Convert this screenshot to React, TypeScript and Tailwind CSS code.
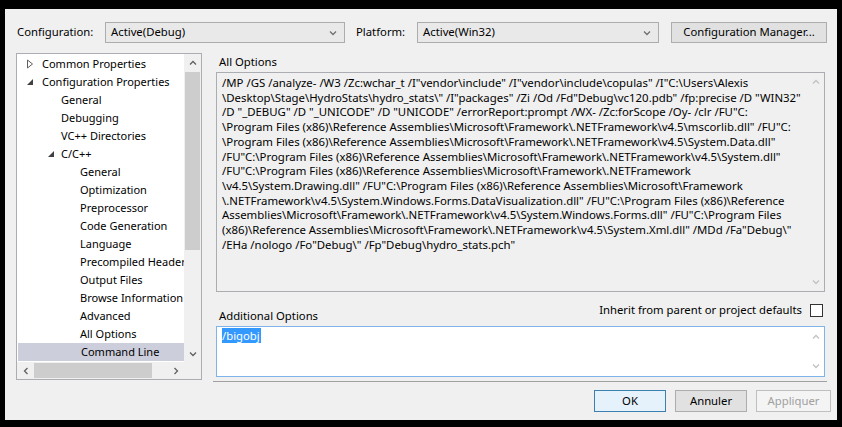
import React from "react";

const allOptions = [
  '/MP /GS /analyze- /W3 /Zc:wchar_t /I"vendor\\include" /I"vendor\\include\\copulas" /I"C:\\Users\\Alexis',
  '\\Desktop\\Stage\\HydroStats\\hydro_stats\\" /I"packages" /Zi /Od /Fd"Debug\\vc120.pdb" /fp:precise /D "WIN32"',
  '/D "_DEBUG" /D "_UNICODE" /D "UNICODE" /errorReport:prompt /WX- /Zc:forScope /Oy- /clr /FU"C:',
  '\\Program Files (x86)\\Reference Assemblies\\Microsoft\\Framework\\.NETFramework\\v4.5\\mscorlib.dll" /FU"C:',
  '\\Program Files (x86)\\Reference Assemblies\\Microsoft\\Framework\\.NETFramework\\v4.5\\System.Data.dll"',
  '/FU"C:\\Program Files (x86)\\Reference Assemblies\\Microsoft\\Framework\\.NETFramework\\v4.5\\System.dll"',
  '/FU"C:\\Program Files (x86)\\Reference Assemblies\\Microsoft\\Framework\\.NETFramework',
  '\\v4.5\\System.Drawing.dll" /FU"C:\\Program Files (x86)\\Reference Assemblies\\Microsoft\\Framework',
  '\\.NETFramework\\v4.5\\System.Windows.Forms.DataVisualization.dll" /FU"C:\\Program Files (x86)\\Reference',
  'Assemblies\\Microsoft\\Framework\\.NETFramework\\v4.5\\System.Windows.Forms.dll" /FU"C:\\Program Files',
  '(x86)\\Reference Assemblies\\Microsoft\\Framework\\.NETFramework\\v4.5\\System.Xml.dll" /MDd /Fa"Debug\\"',
  '/EHa /nologo /Fo"Debug\\" /Fp"Debug\\hydro_stats.pch"',
];

type TreeItem = { label: string; indent: number; arrow?: "open" | "closed"; selected?: boolean };

const treeItems: TreeItem[] = [
  { label: "Common Properties", indent: 0, arrow: "closed" },
  { label: "Configuration Properties", indent: 0, arrow: "open" },
  { label: "General", indent: 1 },
  { label: "Debugging", indent: 1 },
  { label: "VC++ Directories", indent: 1 },
  { label: "C/C++", indent: 1, arrow: "open" },
  { label: "General", indent: 2 },
  { label: "Optimization", indent: 2 },
  { label: "Preprocessor", indent: 2 },
  { label: "Code Generation", indent: 2 },
  { label: "Language", indent: 2 },
  { label: "Precompiled Headers", indent: 2 },
  { label: "Output Files", indent: 2 },
  { label: "Browse Information", indent: 2 },
  { label: "Advanced", indent: 2 },
  { label: "All Options", indent: 2 },
  { label: "Command Line", indent: 2, selected: true },
];

const textPad = ["pl-[25px]", "pl-[44px]", "pl-[63px]"];
const arrowPos = ["left-[9px]", "left-[30px]", "left-[49px]"];

const Chevron = ({ dir, className = "" }: { dir: "up" | "down" | "left" | "right"; className?: string }) => {
  const pts = {
    up: "1,5.5 4,2.5 7,5.5",
    down: "1,2.5 4,5.5 7,2.5",
    left: "5.5,1 2.5,4 5.5,7",
    right: "2.5,1 5.5,4 2.5,7",
  }[dir];
  return (
    <svg width="8" height="8" viewBox="0 0 8 8" className={className}>
      <polyline points={pts} fill="none" stroke="currentColor" strokeWidth="1.3" />
    </svg>
  );
};

const TreeArrow = ({ open }: { open: boolean }) =>
  open ? (
    <svg width="8" height="8" viewBox="0 0 8 8">
      <polygon points="7,1 7,7 1,7" fill="#404040" />
    </svg>
  ) : (
    <svg width="8" height="10" viewBox="0 0 8 10">
      <polygon points="1.5,1 6.5,5 1.5,9" fill="none" stroke="#606060" strokeWidth="1" />
    </svg>
  );

const Combo = ({ value, width }: { value: string; width: string }) => (
  <div className={`flex h-[21px] items-center justify-between border border-[#acacac] bg-[#e9e9e9] pl-[5px] pr-[7px] ${width}`}>
    <span>{value}</span>
    <Chevron dir="down" className="text-[#707070]" />
  </div>
);

const Button = ({ label, width, variant = "normal" }: { label: string; width: string; variant?: "default" | "normal" | "disabled" }) => {
  const styles = {
    default: "border-[#3c7fb1] bg-[#e5f1fb] text-black",
    normal: "border-[#adadad] bg-[#e1e1e1] text-black",
    disabled: "border-[#bfbfbf] bg-[#f4f4f4] text-[#a0a0a0]",
  }[variant];
  return <div className={`flex h-[22px] items-center justify-center border ${styles} ${width}`}>{label}</div>;
};

export default function App() {
  return (
    <div className="h-[427px] w-[842px] overflow-hidden bg-black pb-[7px] pl-[5px] pr-[5px] pt-[9px] font-['Noto_Sans',sans-serif] text-[11.3px] text-black">
      <div className="flex h-full flex-col bg-[#f0f0f0]">
        {/* configuration / platform bar */}
        <div className="flex items-center pl-[11px] pt-[13px]">
          <span className="w-[89px] pl-[1px]">Configuration:</span>
          <Combo value="Active(Debug)" width="w-[240px]" />
          <span className="ml-[11px] w-[61px]">Platform:</span>
          <Combo value="Active(Win32)" width="w-[242px]" />
          <div className="ml-[12px] flex h-[21px] w-[156px] items-center justify-center border border-[#adadad] bg-[#e1e1e1]">
            Configuration Manager...
          </div>
        </div>

        <div className="mt-[10px] flex items-start pl-[11px]">
          {/* property tree */}
          <div className="flex h-[327px] w-[186px] flex-col border border-[#abadb3] bg-white">
            <div className="flex min-h-0 flex-1">
              <div className="min-w-0 flex-1 overflow-hidden pt-[1px] text-[11px]">
                {treeItems.map((item, i) => (
                  <div
                    key={i}
                    className={`relative flex h-[18px] items-center whitespace-nowrap ${textPad[item.indent]} ${item.selected ? "ml-[1px] bg-[#cccedb]" : ""}`}
                  >
                    {item.arrow && (
                      <span className={`absolute top-0 flex h-full items-center ${arrowPos[item.indent]}`}>
                        <TreeArrow open={item.arrow === "open"} />
                      </span>
                    )}
                    {item.label}
                  </div>
                ))}
              </div>
              <div className="flex w-[17px] flex-col items-center bg-[#f0f0f0]">
                <div className="flex h-[17px] items-center justify-center text-[#606060]">
                  <Chevron dir="up" />
                </div>
                <div className="mt-[1px] h-[178px] w-[15px] bg-[#cdcdcd]" />
                <div className="flex-1" />
                <div className="flex h-[17px] items-center justify-center text-[#606060]">
                  <Chevron dir="down" />
                </div>
              </div>
            </div>
            <div className="flex h-[17px] bg-[#f0f0f0]">
              <div className="flex w-[17px] items-center justify-center text-[#606060]">
                <Chevron dir="left" />
              </div>
              <div className="my-[1px] w-[118px] bg-[#cdcdcd]" />
              <div className="flex-1" />
              <div className="flex w-[17px] items-center justify-center text-[#606060]">
                <Chevron dir="right" />
              </div>
              <div className="w-[17px]" />
            </div>
          </div>

          {/* options column */}
          <div className="ml-[11px] flex w-[614px] flex-col">
            <div className="flex h-[19px] items-center pl-[6px]">All Options</div>
            <div className="ml-[3px] flex h-[220px] w-[609px] border border-[#abadb3] bg-[#f0f0f0]">
              <div className="min-w-0 flex-1 overflow-hidden whitespace-nowrap pl-[5px] pt-[3px] text-[11.4px] leading-[14.7px]">
                {allOptions.map((line, i) => (
                  <div key={i}>{line}</div>
                ))}
              </div>
              <div className="flex w-[17px] flex-col items-center justify-between py-[5px] text-[#c2c2c2]">
                <Chevron dir="up" />
                <Chevron dir="down" />
              </div>
            </div>

            <div className="ml-[3px] flex h-[34px] w-[609px] justify-between pr-[2px]">
              <div className="flex h-[18px] items-center self-end pb-[2px] pl-[3px] leading-[16px]">Additional Options</div>
              <div className="mt-[9px] flex h-[18px] items-center gap-[8px]">
                <span>Inherit from parent or project defaults</span>
                <div className="h-[13px] w-[13px] border border-[#333333] bg-white" />
              </div>
            </div>

            <div className="ml-[3px] flex h-[51px] w-[609px] border border-[#7eb4ea] bg-white">
              <div className="min-w-0 flex-1 pl-[5px] pt-[1px]">
                <span className="bg-[#3399ff] pr-[1px] leading-[15px] text-white">/bigobj</span>
              </div>
              <div className="flex w-[17px] flex-col items-center justify-between py-[6px] text-[#c2c2c2]">
                <Chevron dir="up" />
                <Chevron dir="down" />
              </div>
            </div>

            <div className="mt-[4px] h-px bg-[#a0a0a0]" />
          </div>
        </div>

        {/* dialog buttons */}
        <div className="mt-[8px] flex justify-end gap-[9px] pr-[6px]">
          <Button label="OK" width="w-[72px]" variant="default" />
          <Button label="Annuler" width="w-[72px]" />
          <Button label="Appliquer" width="w-[75px]" variant="disabled" />
        </div>
      </div>
    </div>
  );
}
